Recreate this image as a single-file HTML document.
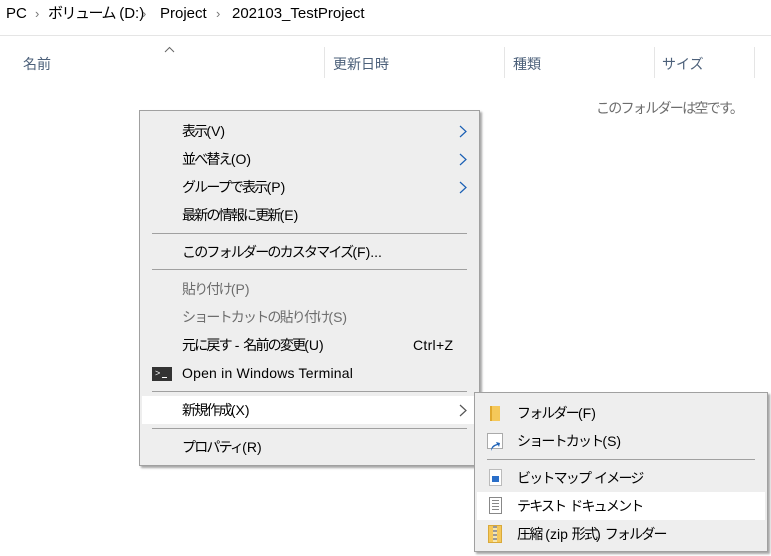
<!DOCTYPE html>
<html><head><meta charset="utf-8"><style>
*{margin:0;padding:0;box-sizing:border-box}
body{width:771px;height:556px;background:#fff;position:relative;overflow:hidden;font-family:"Liberation Sans","Noto Sans CJK JP",sans-serif;font-size:14px;color:#000}
.a{position:absolute;white-space:nowrap;line-height:18px}
.vs{position:absolute;top:47px;height:31px;width:1px;background:#e5e5e5}
.hd{color:#4c607a;font-size:14px}
.menu{position:absolute;background:#eee;border:1px solid #a0a0a0;box-shadow:2px 2px 2px rgba(0,0,0,.35);letter-spacing:-1.8px}
.it{position:absolute;left:0;right:0;height:28px;line-height:28px;white-space:nowrap}
.it span{position:absolute;left:42px}
b{font-weight:normal;letter-spacing:0}
.dis{color:#6d6d6d}
.sep{position:absolute;left:12px;right:12px;height:1px;background:#a0a0a0}
.hi{background:#fff}
.arr{position:absolute;right:12px;top:8px}
</style></head><body>
<div class="a" style="left:6px;top:5px;font-size:15px">PC</div>
<div class="a" style="left:35px;top:5px;font-size:13px;color:#777">›</div>
<div class="a" style="left:48px;top:5px;font-size:15px;letter-spacing:-1.5px">ボリューム<b> (D:)</b></div>
<div class="a" style="left:142px;top:5px;font-size:13px;color:#777">›</div>
<div class="a" style="left:160px;top:5px;font-size:15px">Project</div>
<div class="a" style="left:216px;top:5px;font-size:13px;color:#777">›</div>
<div class="a" style="left:232px;top:5px;font-size:15px">202103_TestProject</div>
<div style="position:absolute;left:0;top:35px;width:771px;height:1px;background:#e5e5e5"></div>
<svg style="position:absolute;left:164px;top:46px" width="11" height="7"><path d="M1 6L5.5 1.5L10 6" fill="none" stroke="#666" stroke-width="1"/></svg>
<div class="a hd" style="left:23px;top:55px">名前</div>
<div class="vs" style="left:324px"></div>
<div class="a hd" style="left:333px;top:55px">更新日時</div>
<div class="vs" style="left:504px"></div>
<div class="a hd" style="left:513px;top:55px">種類</div>
<div class="vs" style="left:654px"></div>
<div class="a hd" style="left:662px;top:55px">サイズ</div>
<div class="vs" style="left:754px"></div>
<div class="a" style="left:596px;top:99px;color:#6d6d6d;font-size:14px;letter-spacing:-1.7px">このフォルダーは空です。</div>

<div class="menu" style="left:139px;top:110px;width:341px;height:356px">
<div class="it" style="top:6px"><span>表示<b>(V)</b></span><svg class="arr" width="8" height="13"><path d="M1 1L7 6.5L1 12" fill="none" stroke="#1a5fb4" stroke-width="1.2"/></svg></div>
<div class="it" style="top:34px"><span>並べ替え<b>(O)</b></span><svg class="arr" width="8" height="13"><path d="M1 1L7 6.5L1 12" fill="none" stroke="#1a5fb4" stroke-width="1.2"/></svg></div>
<div class="it" style="top:62px"><span>グループで表示<b>(P)</b></span><svg class="arr" width="8" height="13"><path d="M1 1L7 6.5L1 12" fill="none" stroke="#1a5fb4" stroke-width="1.2"/></svg></div>
<div class="it" style="top:90px"><span>最新の情報に更新<b>(E)</b></span></div>
<div class="sep" style="top:122px"></div>
<div class="it" style="top:127px"><span>このフォルダーのカスタマイズ<b>(F)...</b></span></div>
<div class="sep" style="top:158px"></div>
<div class="it dis" style="top:164px"><span>貼り付け<b>(P)</b></span></div>
<div class="it dis" style="top:192px"><span>ショートカットの貼り付け<b>(S)</b></span></div>
<div class="it" style="top:220px"><span>元に戻す<b> - </b>名前の変更<b>(U)</b></span><span style="left:273px;letter-spacing:0.3px">Ctrl+Z</span></div>
<div class="it" style="top:248px;letter-spacing:0.2px"><div style="position:absolute;left:12px;top:8px;width:20px;height:14px;background:#333"><div style="position:absolute;left:3px;top:2px;color:#fff;font-size:9px;line-height:9px">&gt;</div><div style="position:absolute;left:10px;top:10px;width:5px;height:1px;background:#fff"></div></div><span>Open in Windows Terminal</span></div>
<div class="sep" style="top:280px"></div>
<div class="it hi" style="top:285px;left:2px;right:2px"><span style="left:40px">新規作成<b>(X)</b></span><svg class="arr" style="right:10px" width="8" height="13"><path d="M1 1L7 6.5L1 12" fill="none" stroke="#555" stroke-width="1.2"/></svg></div>
<div class="sep" style="top:317px"></div>
<div class="it" style="top:322px"><span>プロパティ<b>(R)</b></span></div>
</div>

<div class="menu" style="left:474px;top:392px;width:294px;height:160px">
<div class="it" style="top:6px"><div style="position:absolute;left:15px;top:7px;width:10px;height:15px;background:#f5c85a;border-left:2px solid #e0a82e"></div><span>フォルダー<b>(F)</b></span></div>
<div class="it" style="top:34px"><div style="position:absolute;left:12px;top:6px;width:16px;height:16px;background:#fff;border:1px solid #aaa"><svg width="14" height="14"><path d="M3 12Q3 6 9 5L8 3L12 4L11 8L10 6Q5 7 3 12Z" fill="#1f63b8"/></svg></div><span>ショートカット<b>(S)</b></span></div>
<div class="sep" style="top:66px"></div>
<div class="it" style="top:71px"><div style="position:absolute;left:14px;top:5px;width:13px;height:17px;background:#fff;border:1px solid #bbb"><div style="position:absolute;left:2px;top:6px;width:7px;height:6px;background:#2a6fc9"></div></div><span>ビットマップ<b> </b>イメージ</span></div>
<div class="it hi" style="top:99px;left:2px;right:2px"><div style="position:absolute;left:12px;top:5px;width:13px;height:17px;background:#fff;border:1px solid #888;background-image:repeating-linear-gradient(#fff 0 2px,#888 2px 3px);background-clip:content-box;padding:2px"></div><span style="left:40px">テキスト<b> </b>ドキュメント</span></div>
<div class="it" style="top:127px"><div style="position:absolute;left:13px;top:5px;width:14px;height:18px;background:#f5c85a;border:1px solid #d9a93a"><div style="position:absolute;left:4px;top:0;width:4px;height:16px;background:repeating-linear-gradient(#999 0 2px,#f5e6b0 2px 4px)"></div></div><span>圧縮<b> (zip </b>形式<b>) </b>フォルダー</span></div>
</div>
</body></html>
